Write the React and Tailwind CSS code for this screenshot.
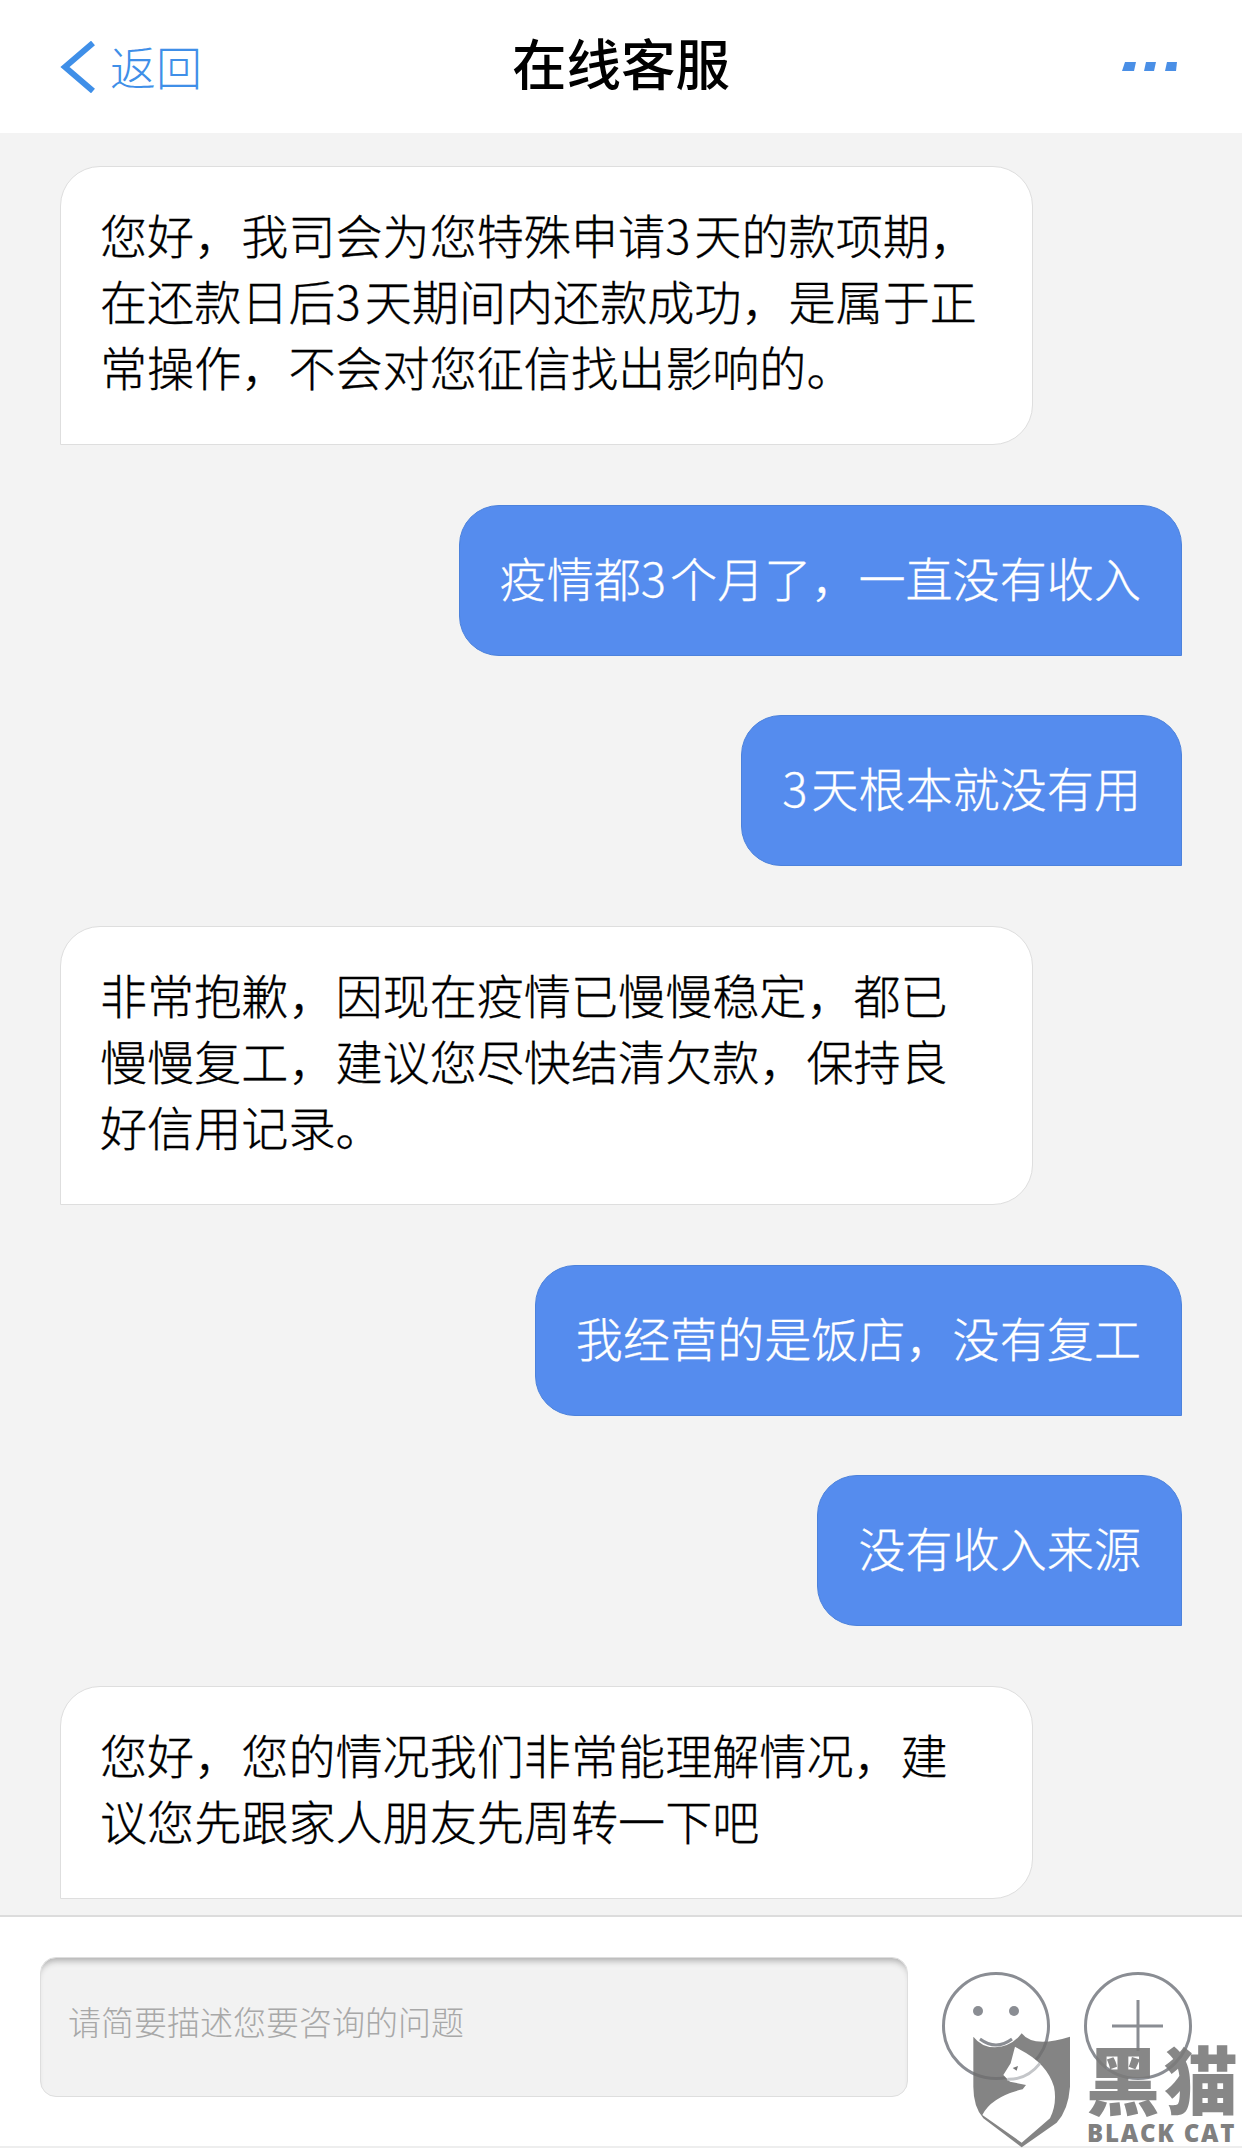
const cjk = 'font-["Noto_Sans_CJK_SC","Noto_Sans",sans-serif]';

function Msg({ text }) {
  const parts = text.split("3");
  return parts.map((p, i) => (
    <span key={i}>
      {i > 0 && <span className="tracking-[4px]">3</span>}
      {p}
    </span>
  ));
}

function Incoming({ lines }) {
  return (
    <div className="w-[973px] self-start rounded-[40px] rounded-bl-none border border-[#dedede] bg-white pl-[39px] pr-[41px] pt-[34px] pb-[45px] text-[47.1px] font-light leading-[66px] text-black [-webkit-text-stroke:0.3px]">
      {lines.map((l) => (
        <div key={l} className="whitespace-nowrap"><Msg text={l} /></div>
      ))}
    </div>
  );
}

function Outgoing({ text }) {
  return (
    <div className="self-end whitespace-nowrap rounded-[40px] rounded-br-none border border-[#4c82dc] bg-[#558cee] px-[40px] pt-[38px] pb-[45px] text-[47.1px] font-light leading-[66px] text-white [-webkit-text-stroke:0.3px]">
      <Msg text={text} />
    </div>
  );
}

function Watermark() {
  return (
    <div className="pointer-events-none absolute left-[900px] top-[1940px] h-[208px] w-[342px]">
      <svg viewBox="0 0 1026 624" className="absolute inset-0 h-[208px] w-[342px]">
        <path
          d="M220 290Q245 322 285 322Q335 320 365 280Q400 325 510 290L510 440Q505 510 470 548L365 622L250 535Q220 500 220 440Z"
          fill="#6f6f6f"
          fillOpacity="0.85"
        />
        <path
          d="M345 320L362 330Q440 370 462 440Q472 490 450 535L365 608L247 525Q275 470 368 448L378 435L330 425L310 405L332 370Z"
          fill="#fff"
        />
        <path d="M338 384L354 378L350 392Z" fill="#777" />
        <path d="M322 418Q380 420 420 370" fill="none" stroke="#c4c6c9" strokeWidth="9" />
      </svg>
      <span className={`absolute left-[186px] top-[100px] text-[74px] font-black leading-none tracking-[4px] text-[#7a7a7a]/90 ${cjk}`}>
        黑猫
      </span>
      <span className='absolute left-[187px] top-[181px] whitespace-nowrap font-["Open_Sans",sans-serif] text-[24px] font-extrabold leading-[24px] tracking-[1.8px] text-[#808080]'>
        BLACK CAT
      </span>
    </div>
  );
}

export default function App() {
  return (
    <div className={`relative flex h-[2148px] w-[1242px] flex-col overflow-hidden bg-[#f3f3f3] ${cjk}`}>
      <header className="grid h-[133px] shrink-0 grid-cols-3 items-center bg-white px-[60px]">
        <div className="flex items-center gap-[14px] text-[#3f8fe8]">
          <svg width="36" height="52" viewBox="0 0 36 52" fill="none">
            <path d="M33 2L5 26L33 50" stroke="#3f8fe8" strokeWidth="6" />
          </svg>
          <span className="-translate-y-[2px] text-[46px] font-light leading-none">返回</span>
        </div>
        <h1 className="-translate-y-[4px] whitespace-nowrap text-center text-[54.5px] font-medium leading-none text-black">在线客服</h1>
        <div className="flex justify-end pr-[4px]">
          <svg width="56" height="10" viewBox="0 0 56 10" fill="#4a8fe6">
            <path d="M3 0H14L12 9H0Z" />
            <path d="M24 0H34L32 9H22Z" />
            <path d="M45 0H55L54 9H43Z" />
          </svg>
        </div>
      </header>

      <main className="flex min-h-0 flex-1 flex-col gap-[59.7px] overflow-hidden px-[60px] pt-[33px]">
        <Incoming lines={["您好，我司会为您特殊申请3天的款项期，", "在还款日后3天期间内还款成功，是属于正", "常操作，不会对您征信找出影响的。"]} />
        <Outgoing text="疫情都3个月了，一直没有收入" />
        <Outgoing text="3天根本就没有用" />
        <Incoming lines={["非常抱歉，因现在疫情已慢慢稳定，都已", "慢慢复工，建议您尽快结清欠款，保持良", "好信用记录。"]} />
        <Outgoing text="我经营的是饭店，没有复工" />
        <Outgoing text="没有收入来源" />
        <Incoming lines={["您好，您的情况我们非常能理解情况，建", "议您先跟家人朋友先周转一下吧"]} />
      </main>

      <footer className="flex h-[233px] shrink-0 items-start gap-[34px] border-t-2 border-b-2 border-t-[#dcdcdc] border-b-[#eeeeee] bg-white pl-[40px] pt-[40px]">
        <div className="flex h-[140px] w-[868px] items-center rounded-[16px] border border-[#dedede] bg-[#f2f2f2] pb-[10px] pl-[27px] text-[33px] font-light text-[#a8a8a8] shadow-[inset_0_7px_6px_-4px_#b0b0b0]">
          请简要描述您要咨询的问题
        </div>
        <div className="mt-[15px] flex gap-[34px]">
          <svg width="108" height="108" viewBox="0 0 108 108" fill="none" stroke="#8a8d93" strokeWidth="3">
            <circle cx="54" cy="54" r="52.5" />
            <circle cx="36" cy="39" r="5" fill="#8a8d93" stroke="none" />
            <circle cx="72" cy="39" r="5" fill="#8a8d93" stroke="none" />
            <path d="M38 67Q54 79 70 67" />
          </svg>
          <svg width="108" height="108" viewBox="0 0 108 108" fill="none" stroke="#8a8d93" strokeWidth="3">
            <circle cx="54" cy="54" r="52.5" />
            <path d="M54 28V79M28 54H79" />
          </svg>
        </div>
      </footer>

      <Watermark />
    </div>
  );
}
